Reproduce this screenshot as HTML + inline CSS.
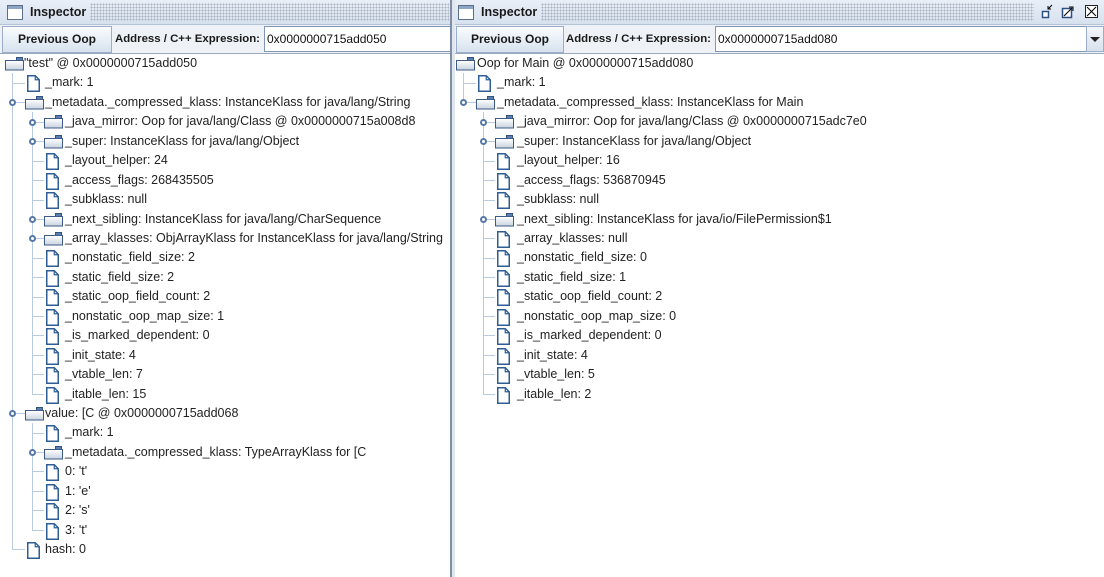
<!DOCTYPE html>
<html><head><meta charset="utf-8"><style>
*{margin:0;padding:0;box-sizing:border-box}
body{width:1104px;height:577px;background:#eef2f7;font-family:"Liberation Sans",sans-serif;font-size:12.5px;color:#222;position:relative;overflow:hidden}
.p{position:absolute;top:0;height:577px;background:#fff}
.title{position:absolute;left:0;right:0;top:0;height:25px;background:linear-gradient(#e9eff8,#d7e1ee);border-bottom:1px solid #b4c3d6}
.dots{position:absolute;top:3px;bottom:3px;background-image:radial-gradient(#a9b2be 0.9px,transparent 1px);background-size:3px 3px}
.tt{position:absolute;top:5px;font-weight:bold;font-size:12.5px;color:#1a1a1a}
.tb{position:absolute;left:0;right:0;top:25px;height:29px;background:#eef2f7;border-bottom:1px solid #9aa9bc}
.btn{position:absolute;top:1px;height:27px;background:linear-gradient(#fafcfe,#d7e2ef);border:1px solid #9aaecb;font-weight:bold;font-size:12px;line-height:25px;text-align:center;color:#1a1a1a}
.lbl{position:absolute;top:8px;font-weight:bold;font-size:11.4px;color:#1a1a1a;white-space:nowrap}
.fld{position:absolute;top:1px;height:26px;background:#fff;border:1px solid #7f96b4;line-height:24px;padding-left:2px;color:#111;font-size:12px}
.r{position:absolute;height:19px;line-height:19px;white-space:nowrap;color:#222}
.r svg{position:absolute;top:2px;left:0}
.vl{position:absolute;width:1px;background:#b9cbe0}
.hl{position:absolute;height:1px;background:#b9cbe0}
.k{position:absolute;width:7px;height:7px;border:2px solid #5679a8;border-radius:50%;background:#fff}
</style></head><body>
<svg width="0" height="0" style="position:absolute">
<defs>
<linearGradient id="g" x1="0" y1="0" x2="0" y2="1"><stop offset="0" stop-color="#fff"/><stop offset="1" stop-color="#c9d3df"/></linearGradient>
<symbol id="fo" viewBox="0 0 19 15"><path d="M11.5 1.5h6v3h-6z" fill="#5c7fb2" stroke="#34527f"/><path d="M0.5 4.5h18v9.5h-18z" fill="url(#g)" stroke="#3d5b86"/><path d="M1 5.5h17" stroke="#fff"/></symbol>
<symbol id="fi" viewBox="0 0 13 17"><path d="M0.75 0.75h7.5l4 4v11.5h-11.5z" fill="#fff" stroke="#2f5d95" stroke-width="1.5"/><path d="M8.25 0.75v4h4" fill="none" stroke="#2f5d95" stroke-width="1.2"/></symbol>
</defs></svg>

<!-- LEFT PANEL -->
<div class="p" style="left:0;width:451px">
<div class="title"><svg style="position:absolute;left:7px;top:5px" width="16" height="15"><rect x="0.5" y="0.5" width="15" height="14" fill="#fff" stroke="#5a6f8c"/><rect x="1" y="1" width="14" height="3" fill="#8ea6c6"/></svg><span class="tt" style="left:30px">Inspector</span><div class="dots" style="left:90px;right:2px"></div></div>
<div class="tb"><div class="btn" style="left:2px;width:110px">Previous Oop</div><span class="lbl" style="left:115px">Address / C++ Expression:</span><div class="fld" style="left:264px;width:187px">0x0000000715add050</div></div>
</div>
<div style="position:absolute;left:450px;top:0;width:5px;height:577px;background:#dfe6ef;border-left:2px solid #7d8ea6"></div>

<!-- RIGHT PANEL -->
<div class="p" style="left:455px;width:649px">
<div class="title"><svg style="position:absolute;left:3px;top:5px" width="16" height="15"><rect x="0.5" y="0.5" width="15" height="14" fill="#fff" stroke="#5a6f8c"/><rect x="1" y="1" width="14" height="3" fill="#8ea6c6"/></svg><span class="tt" style="left:26px">Inspector</span><div class="dots" style="left:86px;right:70px"></div>
<svg style="position:absolute;left:585px;top:3px" width="60" height="18"><rect x="2.5" y="8.5" width="6" height="6" fill="#fff" stroke="#2f4f80" stroke-width="1.5"/><path d="M8 6l4-4M8 3v3h3" stroke="#000" fill="none"/><rect x="22.5" y="5.5" width="9" height="9" fill="#fff" stroke="#2f4f80" stroke-width="1.5"/><path d="M24 13l8-8M29 4h4v4" stroke="#000" fill="none"/><rect x="45.5" y="2.5" width="12" height="12" fill="#fff" stroke="#222"/><path d="M47 4l9 9M56 4l-9 9" stroke="#000"/></svg></div>
<div class="tb"><div class="btn" style="left:1px;width:108px">Previous Oop</div><span class="lbl" style="left:111px">Address / C++ Expression:</span><div class="fld" style="left:260px;width:372px">0x0000000715add080</div><div style="position:absolute;left:631px;top:1px;width:18px;height:26px;background:linear-gradient(#f3f6fa,#d8e1ec);border:1px solid #9aaecb"><div style="position:absolute;left:3px;top:10px;border-left:5px solid transparent;border-right:5px solid transparent;border-top:5px solid #222"></div></div></div>
</div>

<!-- LEFT TREE LINES -->
<div class="vl" style="left:12px;top:73px;height:477px"></div>
<div class="vl" style="left:32px;top:112px;height:282px"></div>
<div class="vl" style="left:32px;top:423px;height:107px"></div>
<div class="hl" style="left:12px;top:83px;width:13px"></div>
<div class="hl" style="left:12px;top:102px;width:13px"></div>
<div class="hl" style="left:12px;top:413px;width:13px"></div>
<div class="hl" style="left:12px;top:549px;width:13px"></div>
<div class="hl" style="left:32px;top:122px;width:12px"></div><div class="hl" style="left:32px;top:141px;width:12px"></div><div class="hl" style="left:32px;top:161px;width:12px"></div><div class="hl" style="left:32px;top:180px;width:12px"></div><div class="hl" style="left:32px;top:200px;width:12px"></div><div class="hl" style="left:32px;top:219px;width:12px"></div><div class="hl" style="left:32px;top:238px;width:12px"></div><div class="hl" style="left:32px;top:258px;width:12px"></div><div class="hl" style="left:32px;top:277px;width:12px"></div><div class="hl" style="left:32px;top:297px;width:12px"></div><div class="hl" style="left:32px;top:316px;width:12px"></div><div class="hl" style="left:32px;top:335px;width:12px"></div><div class="hl" style="left:32px;top:355px;width:12px"></div><div class="hl" style="left:32px;top:374px;width:12px"></div><div class="hl" style="left:32px;top:394px;width:12px"></div>
<div class="hl" style="left:32px;top:433px;width:12px"></div><div class="hl" style="left:32px;top:452px;width:12px"></div><div class="hl" style="left:32px;top:471px;width:12px"></div><div class="hl" style="left:32px;top:491px;width:12px"></div><div class="hl" style="left:32px;top:510px;width:12px"></div><div class="hl" style="left:32px;top:530px;width:12px"></div>
<div class="k" style="left:9px;top:99px"></div><div class="k" style="left:9px;top:410px"></div>
<div class="k" style="left:29px;top:119px"></div><div class="k" style="left:29px;top:138px"></div><div class="k" style="left:29px;top:216px"></div><div class="k" style="left:29px;top:235px"></div><div class="k" style="left:29px;top:449px"></div>

<!-- LEFT ROWS -->
<div class="r" style="left:5px;top:54px"><svg width="19" height="15"><use href="#fo"/></svg><span style="margin-left:19px">"test" @ 0x0000000715add050</span></div>
<div class="r" style="left:27px;top:73px"><svg width="13" height="17"><use href="#fi"/></svg><span style="margin-left:18px">_mark: 1</span></div>
<div class="r" style="left:25px;top:93px"><svg width="19" height="15"><use href="#fo"/></svg><span style="margin-left:20px">_metadata._compressed_klass: InstanceKlass for java/lang/String</span></div>
<div class="r" style="left:44px;top:112px"><svg width="19" height="15"><use href="#fo"/></svg><span style="margin-left:21px">_java_mirror: Oop for java/lang/Class @ 0x0000000715a008d8</span></div>
<div class="r" style="left:44px;top:132px"><svg width="19" height="15"><use href="#fo"/></svg><span style="margin-left:21px">_super: InstanceKlass for java/lang/Object</span></div>
<div class="r" style="left:46px;top:151px"><svg width="13" height="17"><use href="#fi"/></svg><span style="margin-left:19px">_layout_helper: 24</span></div>
<div class="r" style="left:46px;top:171px"><svg width="13" height="17"><use href="#fi"/></svg><span style="margin-left:19px">_access_flags: 268435505</span></div>
<div class="r" style="left:46px;top:190px"><svg width="13" height="17"><use href="#fi"/></svg><span style="margin-left:19px">_subklass: null</span></div>
<div class="r" style="left:44px;top:210px"><svg width="19" height="15"><use href="#fo"/></svg><span style="margin-left:21px">_next_sibling: InstanceKlass for java/lang/CharSequence</span></div>
<div class="r" style="left:44px;top:229px"><svg width="19" height="15"><use href="#fo"/></svg><span style="margin-left:21px">_array_klasses: ObjArrayKlass for InstanceKlass for java/lang/String</span></div>
<div class="r" style="left:46px;top:248px"><svg width="13" height="17"><use href="#fi"/></svg><span style="margin-left:19px">_nonstatic_field_size: 2</span></div>
<div class="r" style="left:46px;top:268px"><svg width="13" height="17"><use href="#fi"/></svg><span style="margin-left:19px">_static_field_size: 2</span></div>
<div class="r" style="left:46px;top:287px"><svg width="13" height="17"><use href="#fi"/></svg><span style="margin-left:19px">_static_oop_field_count: 2</span></div>
<div class="r" style="left:46px;top:307px"><svg width="13" height="17"><use href="#fi"/></svg><span style="margin-left:19px">_nonstatic_oop_map_size: 1</span></div>
<div class="r" style="left:46px;top:326px"><svg width="13" height="17"><use href="#fi"/></svg><span style="margin-left:19px">_is_marked_dependent: 0</span></div>
<div class="r" style="left:46px;top:346px"><svg width="13" height="17"><use href="#fi"/></svg><span style="margin-left:19px">_init_state: 4</span></div>
<div class="r" style="left:46px;top:365px"><svg width="13" height="17"><use href="#fi"/></svg><span style="margin-left:19px">_vtable_len: 7</span></div>
<div class="r" style="left:46px;top:385px"><svg width="13" height="17"><use href="#fi"/></svg><span style="margin-left:19px">_itable_len: 15</span></div>
<div class="r" style="left:25px;top:404px"><svg width="19" height="15"><use href="#fo"/></svg><span style="margin-left:20px">value: [C @ 0x0000000715add068</span></div>
<div class="r" style="left:46px;top:423px"><svg width="13" height="17"><use href="#fi"/></svg><span style="margin-left:19px">_mark: 1</span></div>
<div class="r" style="left:44px;top:443px"><svg width="19" height="15"><use href="#fo"/></svg><span style="margin-left:21px">_metadata._compressed_klass: TypeArrayKlass for [C</span></div>
<div class="r" style="left:46px;top:462px"><svg width="13" height="17"><use href="#fi"/></svg><span style="margin-left:19px">0: 't'</span></div>
<div class="r" style="left:46px;top:482px"><svg width="13" height="17"><use href="#fi"/></svg><span style="margin-left:19px">1: 'e'</span></div>
<div class="r" style="left:46px;top:501px"><svg width="13" height="17"><use href="#fi"/></svg><span style="margin-left:19px">2: 's'</span></div>
<div class="r" style="left:46px;top:521px"><svg width="13" height="17"><use href="#fi"/></svg><span style="margin-left:19px">3: 't'</span></div>
<div class="r" style="left:27px;top:540px"><svg width="13" height="17"><use href="#fi"/></svg><span style="margin-left:18px">hash: 0</span></div>

<!-- RIGHT TREE LINES -->
<div class="vl" style="left:463px;top:73px;height:30px"></div>
<div class="vl" style="left:483px;top:112px;height:282px"></div>
<div class="hl" style="left:463px;top:83px;width:13px"></div>
<div class="hl" style="left:463px;top:102px;width:13px"></div>
<div class="hl" style="left:483px;top:122px;width:12px"></div><div class="hl" style="left:483px;top:141px;width:12px"></div><div class="hl" style="left:483px;top:161px;width:12px"></div><div class="hl" style="left:483px;top:180px;width:12px"></div><div class="hl" style="left:483px;top:200px;width:12px"></div><div class="hl" style="left:483px;top:219px;width:12px"></div><div class="hl" style="left:483px;top:238px;width:12px"></div><div class="hl" style="left:483px;top:258px;width:12px"></div><div class="hl" style="left:483px;top:277px;width:12px"></div><div class="hl" style="left:483px;top:297px;width:12px"></div><div class="hl" style="left:483px;top:316px;width:12px"></div><div class="hl" style="left:483px;top:335px;width:12px"></div><div class="hl" style="left:483px;top:355px;width:12px"></div><div class="hl" style="left:483px;top:374px;width:12px"></div><div class="hl" style="left:483px;top:394px;width:12px"></div>
<div class="k" style="left:460px;top:99px"></div>
<div class="k" style="left:480px;top:119px"></div><div class="k" style="left:480px;top:138px"></div><div class="k" style="left:480px;top:216px"></div>

<!-- RIGHT ROWS -->
<div class="r" style="left:456px;top:54px"><svg width="19" height="15"><use href="#fo"/></svg><span style="margin-left:21px">Oop for Main @ 0x0000000715add080</span></div>
<div class="r" style="left:478px;top:73px"><svg width="13" height="17"><use href="#fi"/></svg><span style="margin-left:19px">_mark: 1</span></div>
<div class="r" style="left:476px;top:93px"><svg width="19" height="15"><use href="#fo"/></svg><span style="margin-left:21px">_metadata._compressed_klass: InstanceKlass for Main</span></div>
<div class="r" style="left:495px;top:112px"><svg width="19" height="15"><use href="#fo"/></svg><span style="margin-left:22px">_java_mirror: Oop for java/lang/Class @ 0x0000000715adc7e0</span></div>
<div class="r" style="left:495px;top:132px"><svg width="19" height="15"><use href="#fo"/></svg><span style="margin-left:22px">_super: InstanceKlass for java/lang/Object</span></div>
<div class="r" style="left:497px;top:151px"><svg width="13" height="17"><use href="#fi"/></svg><span style="margin-left:20px">_layout_helper: 16</span></div>
<div class="r" style="left:497px;top:171px"><svg width="13" height="17"><use href="#fi"/></svg><span style="margin-left:20px">_access_flags: 536870945</span></div>
<div class="r" style="left:497px;top:190px"><svg width="13" height="17"><use href="#fi"/></svg><span style="margin-left:20px">_subklass: null</span></div>
<div class="r" style="left:495px;top:210px"><svg width="19" height="15"><use href="#fo"/></svg><span style="margin-left:22px">_next_sibling: InstanceKlass for java/io/FilePermission$1</span></div>
<div class="r" style="left:497px;top:229px"><svg width="13" height="17"><use href="#fi"/></svg><span style="margin-left:20px">_array_klasses: null</span></div>
<div class="r" style="left:497px;top:248px"><svg width="13" height="17"><use href="#fi"/></svg><span style="margin-left:20px">_nonstatic_field_size: 0</span></div>
<div class="r" style="left:497px;top:268px"><svg width="13" height="17"><use href="#fi"/></svg><span style="margin-left:20px">_static_field_size: 1</span></div>
<div class="r" style="left:497px;top:287px"><svg width="13" height="17"><use href="#fi"/></svg><span style="margin-left:20px">_static_oop_field_count: 2</span></div>
<div class="r" style="left:497px;top:307px"><svg width="13" height="17"><use href="#fi"/></svg><span style="margin-left:20px">_nonstatic_oop_map_size: 0</span></div>
<div class="r" style="left:497px;top:326px"><svg width="13" height="17"><use href="#fi"/></svg><span style="margin-left:20px">_is_marked_dependent: 0</span></div>
<div class="r" style="left:497px;top:346px"><svg width="13" height="17"><use href="#fi"/></svg><span style="margin-left:20px">_init_state: 4</span></div>
<div class="r" style="left:497px;top:365px"><svg width="13" height="17"><use href="#fi"/></svg><span style="margin-left:20px">_vtable_len: 5</span></div>
<div class="r" style="left:497px;top:385px"><svg width="13" height="17"><use href="#fi"/></svg><span style="margin-left:20px">_itable_len: 2</span></div>
</body></html>
